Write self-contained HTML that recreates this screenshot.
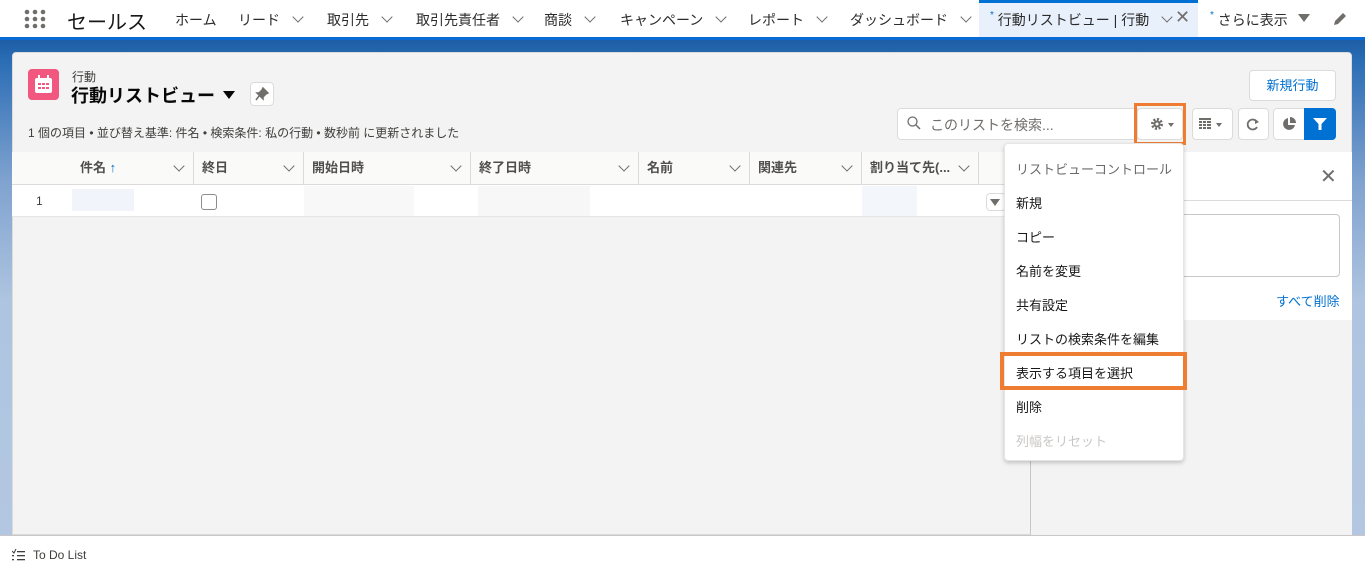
<!DOCTYPE html>
<html><head><meta charset="utf-8"><style>
*{box-sizing:border-box;margin:0;padding:0}
body{width:1365px;height:575px;overflow:hidden;font-family:"Liberation Sans","Noto Sans CJK JP",sans-serif;color:#080707;background:#fff;position:relative}
.a{position:absolute}
.nav{left:0;top:0;width:1365px;height:37px;background:#fff}
.tab{position:absolute;top:10px;font-size:14px;color:#2b2b2b;white-space:nowrap}
.chev{display:inline-block;width:8px;height:8px;border-right:1.5px solid #706e6b;border-bottom:1.5px solid #706e6b;transform:rotate(45deg);margin-left:14px;position:relative;top:-4px}
.bg{left:0;top:37px;width:1365px;height:498px;background:linear-gradient(#1d5ea6 0px,#2a6db5 20px,#7fa2cf 140px,#aec4e0 260px,#b3c7e2 498px);border-top:3px solid #0a6bd4}
.card{left:12px;top:52px;width:1340px;height:483px;background:#f3f3f3;border-radius:4px 4px 0 0;border:1px solid #dddbda;overflow:hidden}
.btn{position:absolute;background:#fff;border:1px solid #dddbda;border-radius:4px}
.th{position:absolute;top:152px;height:33px;background:#fafaf9;border-bottom:1px solid #dddbda;border-right:1px solid #dddbda;font-size:13px;font-weight:bold;color:#514f4d;line-height:32px;padding-left:8px}
.th .chev{position:absolute;right:10px;top:10px;margin:0;border-color:#706e6b}
.mi{position:absolute;left:1016px;font-size:13px;color:#181818}
</style></head><body>
<div class="a nav">
 <svg class="a" style="left:24px;top:9px" width="22" height="20"><g fill="#706e6b"><circle cx="3" cy="3" r="2.3"/><circle cx="11" cy="3" r="2.3"/><circle cx="19" cy="3" r="2.3"/><circle cx="3" cy="10" r="2.3"/><circle cx="11" cy="10" r="2.3"/><circle cx="19" cy="10" r="2.3"/><circle cx="3" cy="17" r="2.3"/><circle cx="11" cy="17" r="2.3"/><circle cx="19" cy="17" r="2.3"/></g></svg>
 <div class="a" style="left:67px;top:6px;font-size:20px;color:#181818">セールス</div>
 <div class="tab" style="left:175px">ホーム</div>
 <div class="tab" style="left:238px">リード<span class="chev"></span></div>
 <div class="tab" style="left:327px">取引先<span class="chev"></span></div>
 <div class="tab" style="left:416px">取引先責任者<span class="chev"></span></div>
 <div class="tab" style="left:544px">商談<span class="chev"></span></div>
 <div class="tab" style="left:620px">キャンペーン<span class="chev"></span></div>
 <div class="tab" style="left:748px">レポート<span class="chev"></span></div>
 <div class="tab" style="left:850px">ダッシュボード<span class="chev"></span></div>
 <div class="a" style="left:979px;top:0;width:219px;height:37px;background:#e8f1fb;border-top:3px solid #0070d2"></div>
 <div class="tab" style="left:990px"><span style="color:#0070d2;font-size:10px;vertical-align:top">*</span> 行動リストビュー | 行動<span class="chev"></span></div>
 <div class="a" style="left:1175px;top:7px;font-size:18px;color:#706e6b">✕</div>
 <div class="tab" style="left:1210px"><span style="color:#0070d2;font-size:10px;vertical-align:top">*</span> さらに表示</div>
 <div class="a" style="left:1298px;top:14px;width:0;height:0;border-left:6px solid transparent;border-right:6px solid transparent;border-top:8px solid #706e6b"></div>
 <svg class="a" style="left:1333px;top:12px" width="14" height="14"><path d="M1 13 L2 9 L10 1 L13 4 L5 12 Z" fill="#706e6b"/></svg>
</div>
<div class="a bg"></div>
<div class="a card"></div>
<div class="a" style="left:28px;top:69px;width:31px;height:31px;background:#f2577f;border-radius:4px"></div>
<svg class="a" style="left:34px;top:74px" width="19" height="21"><rect x="1" y="4" width="17" height="15" rx="2" fill="#fff"/><rect x="4" y="1" width="2" height="5" fill="#fff"/><rect x="13" y="1" width="2" height="5" fill="#fff"/><g fill="#f2577f"><rect x="4" y="9" width="3" height="2"/><rect x="8" y="9" width="3" height="2"/><rect x="12" y="9" width="3" height="2"/><rect x="4" y="13" width="3" height="2"/><rect x="8" y="13" width="3" height="2"/><rect x="12" y="13" width="3" height="2"/></g></svg>
<div class="a" style="left:72px;top:68px;font-size:12px;color:#3e3e3c">行動</div>
<div class="a" style="left:71px;top:82px;font-size:18px;font-weight:bold">行動リストビュー</div>
<div class="a" style="left:223px;top:91px;border-left:6px solid transparent;border-right:6px solid transparent;border-top:8px solid #080707"></div>
<div class="btn" style="left:250px;top:82px;width:24px;height:24px"></div>
<svg class="a" style="left:255px;top:87px" width="14" height="14"><path d="M8 1 L13 6 L11 7 L8 10 L8 12 L2 6 L4 6 L7 3 Z M4 9 L1 13" stroke="#706e6b" stroke-width="1.5" fill="#706e6b"/></svg>
<div class="a" style="left:28px;top:124px;font-size:12px;color:#3e3e3c">1 個の項目 • 並び替え基準: 件名 • 検索条件: 私の行動 • 数秒前 に更新されました</div>
<div class="btn" style="left:1249px;top:70px;width:87px;height:31px;font-size:13px;color:#0070d2;text-align:center;line-height:29px">新規行動</div>
<div class="btn" style="left:897px;top:108px;width:241px;height:32px;border-radius:4px 0 0 4px"></div>
<svg class="a" style="left:907px;top:116px" width="14" height="14"><circle cx="5.5" cy="5.5" r="4.5" stroke="#706e6b" stroke-width="1.3" fill="none"/><path d="M9 9 L13 13" stroke="#706e6b" stroke-width="1.5"/></svg>
<div class="a" style="left:930px;top:115px;font-size:14px;color:#706e6b">このリストを検索...</div>
<div class="btn" style="left:1137px;top:108px;width:46px;height:32px"></div>
<div class="a" style="left:1134px;top:103px;width:52px;height:42px;border:3px solid #ee7d31"></div>
<svg class="a" style="left:1150px;top:117px" width="14" height="14"><circle cx="7" cy="7" r="4.5" fill="none" stroke="#706e6b" stroke-width="3" stroke-dasharray="2 1.5"/><circle cx="7" cy="7" r="3.5" fill="#706e6b"/><circle cx="7" cy="7" r="1.5" fill="#fff"/></svg>
<div class="a" style="left:1168px;top:123px;border-left:3px solid transparent;border-right:3px solid transparent;border-top:4px solid #706e6b"></div>
<div class="btn" style="left:1192px;top:108px;width:41px;height:32px"></div>
<svg class="a" style="left:1199px;top:118px" width="12" height="12"><g fill="#706e6b"><rect width="12" height="2"/><rect y="3" width="3" height="2"/><rect x="4" y="3" width="3" height="2"/><rect x="8" y="3" width="4" height="2"/><rect y="6" width="3" height="2"/><rect x="4" y="6" width="3" height="2"/><rect x="8" y="6" width="4" height="2"/><rect y="9" width="3" height="2"/><rect x="4" y="9" width="3" height="2"/><rect x="8" y="9" width="4" height="2"/></g></svg>
<div class="a" style="left:1216px;top:123px;border-left:3px solid transparent;border-right:3px solid transparent;border-top:4px solid #706e6b"></div>
<div class="btn" style="left:1238px;top:108px;width:31px;height:32px"></div>
<svg class="a" style="left:1246px;top:117px" width="14" height="14"><path d="M11 5 A5 5 0 1 0 11 10" stroke="#706e6b" stroke-width="1.8" fill="none"/><path d="M9 2 L13 5 L9 7 Z" fill="#706e6b"/></svg>
<div class="btn" style="left:1273px;top:108px;width:63px;height:32px"></div>
<div class="a" style="left:1304px;top:108px;width:32px;height:32px;background:#0070d2;border-radius:0 4px 4px 0"></div>
<svg class="a" style="left:1282px;top:117px" width="14" height="14"><path d="M6 1 A6 6 0 1 0 13 8 L6 8 Z" fill="#706e6b"/><path d="M8 0 A6 6 0 0 1 14 6 L8 6 Z" fill="#706e6b"/></svg>
<svg class="a" style="left:1313px;top:117px" width="14" height="14"><path d="M0 1 L14 1 L8.5 7 L8.5 13 L5.5 13 L5.5 7 Z" fill="#fff"/></svg>
<div class="th" style="left:12px;width:58px;border-right:none"></div>
<div class="th" style="left:70px;width:124px;padding-left:10px">件名 <span style="color:#0070d2">↑</span><span class="chev"></span></div>
<div class="th" style="left:194px;width:110px">終日<span class="chev"></span></div>
<div class="th" style="left:304px;width:167px">開始日時<span class="chev"></span></div>
<div class="th" style="left:471px;width:168px">終了日時<span class="chev"></span></div>
<div class="th" style="left:639px;width:111px">名前<span class="chev"></span></div>
<div class="th" style="left:750px;width:112px">関連先<span class="chev"></span></div>
<div class="th" style="left:862px;width:117px">割り当て先(...<span class="chev"></span></div>
<div class="th" style="left:979px;width:51px;border-right:none"></div>
<div class="a" style="left:12px;top:185px;width:1018px;height:32px;background:#fff;border-bottom:1px solid #e5e5e5"></div>
<div class="a" style="left:36px;top:194px;font-size:12px;color:#3e3e3c">1</div>
<div class="a" style="left:72px;top:189px;width:62px;height:22px;background:#f1f4fb"></div>
<div class="a" style="left:201px;top:194px;width:16px;height:16px;border:1px solid #8c8c8c;border-radius:3px;background:#fff"></div>
<div class="a" style="left:304px;top:186px;width:110px;height:30px;background:#f8f8f8"></div>
<div class="a" style="left:478px;top:186px;width:112px;height:30px;background:#f7f7f7"></div>
<div class="a" style="left:862px;top:186px;width:55px;height:30px;background:#f3f6fb"></div>
<div class="btn" style="left:986px;top:193px;width:20px;height:18px"></div>
<div class="a" style="left:990px;top:199px;border-left:5px solid transparent;border-right:5px solid transparent;border-top:7px solid #706e6b"></div>
<div class="a" style="left:1030px;top:152px;width:322px;height:383px;background:#f3f3f3;border-left:1px solid #c9c7c5"></div>
<div class="a" style="left:1031px;top:152px;width:321px;height:168px;background:#fff"></div>
<div class="a" style="left:1031px;top:200px;width:321px;height:1px;background:#dddbda"></div>
<div class="a" style="left:1320px;top:164px;font-size:20px;color:#706e6b">✕</div>
<div class="a" style="left:1150px;top:214px;width:190px;height:63px;border:1px solid #c9c7c5;border-radius:4px"></div>
<div class="a" style="left:1276px;top:291px;font-size:13px;color:#0070d2">すべて削除</div>
<div class="a" style="left:1004px;top:143px;width:180px;height:318px;background:#fff;border-radius:4px;box-shadow:0 2px 4px rgba(0,0,0,.2);border:1px solid #e5e5e5"></div>
<div class="mi" style="top:159px;color:#6b6b6b">リストビューコントロール</div>
<div class="mi" style="top:193px">新規</div>
<div class="mi" style="top:227px">コピー</div>
<div class="mi" style="top:261px">名前を変更</div>
<div class="mi" style="top:295px">共有設定</div>
<div class="mi" style="top:329px">リストの検索条件を編集</div>
<div class="a" style="left:1000px;top:352px;width:187px;height:38px;border:4px solid #ee7d31"></div>
<div class="mi" style="top:363px">表示する項目を選択</div>
<div class="mi" style="top:397px">削除</div>
<div class="mi" style="top:431px;color:#c9c7c5">列幅をリセット</div>
<div class="a" style="left:0;top:535px;width:1365px;height:40px;background:#fff;border-top:1px solid #c9c7c5"></div>
<svg class="a" style="left:12px;top:549px" width="13" height="12"><path d="M0 2 L2 4 L4 0" stroke="#3e3e3c" fill="none"/><g fill="#3e3e3c"><rect x="5" y="2" width="8" height="1.3"/><rect x="0" y="6" width="2" height="1.3"/><rect x="5" y="6" width="8" height="1.3"/><rect x="0" y="10" width="2" height="1.3"/><rect x="5" y="10" width="8" height="1.3"/></g></svg>
<div class="a" style="left:33px;top:548px;font-size:12px;color:#3e3e3c">To Do List</div>
</body></html>
